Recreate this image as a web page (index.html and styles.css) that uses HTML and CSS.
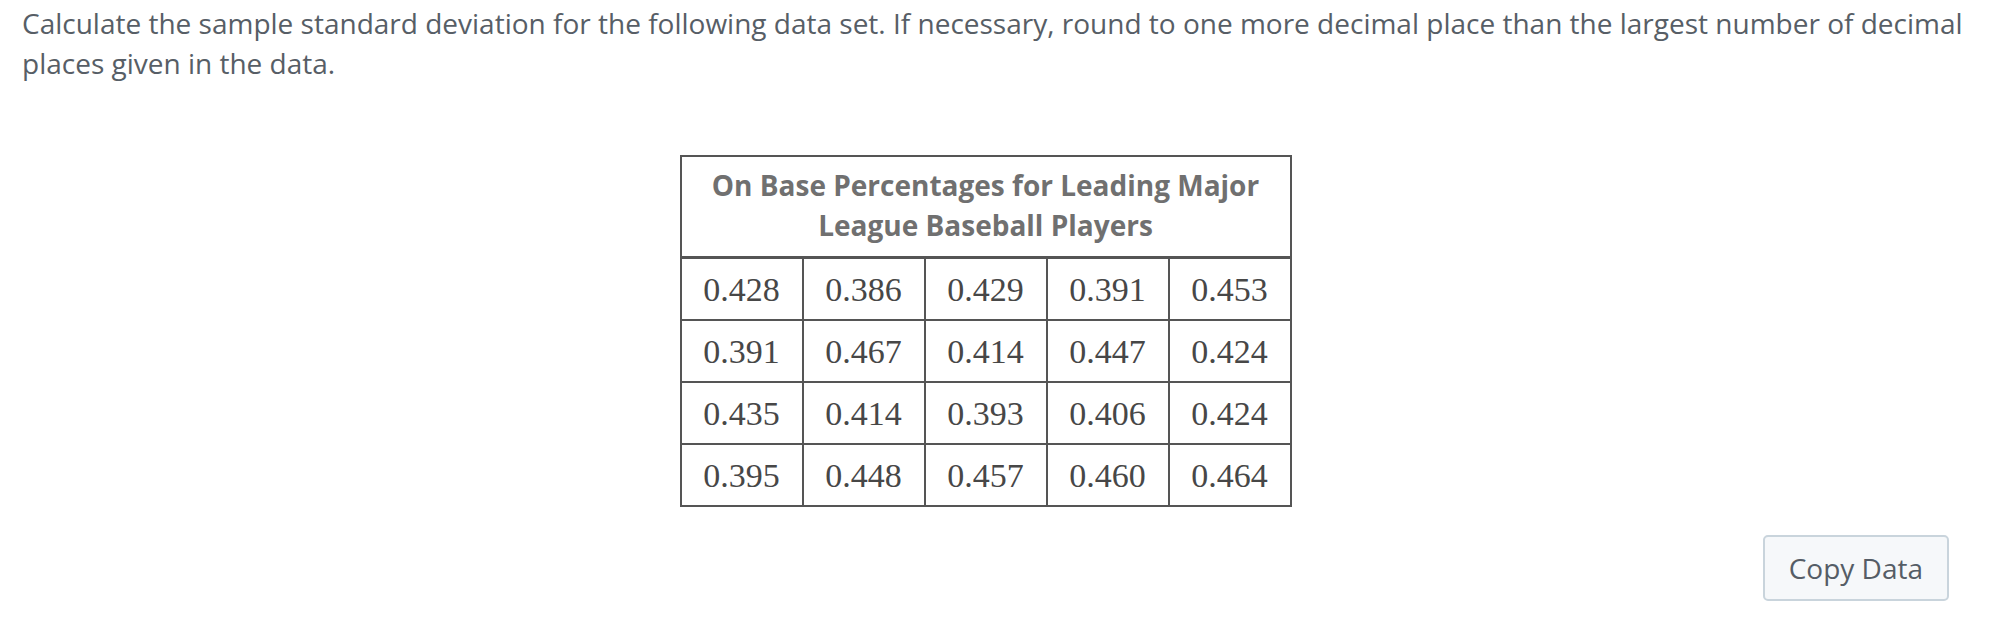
FILE: index.html
```html
<!DOCTYPE html>
<html>
<head>
<meta charset="utf-8">
<link rel="stylesheet" href="styles.css">
</head>
<body>
<div class="content">
  <p class="question">Calculate the sample standard deviation for the following data set. If necessary, round to one more decimal place than the largest number of decimal places given in the data.</p>
  <div class="table-wrap">
    <table class="data">
      <thead>
        <tr><th colspan="5">On Base Percentages for Leading Major<br>League Baseball Players</th></tr>
      </thead>
      <tbody>
        <tr><td>0.428</td><td>0.386</td><td>0.429</td><td>0.391</td><td>0.453</td></tr>
        <tr><td>0.391</td><td>0.467</td><td>0.414</td><td>0.447</td><td>0.424</td></tr>
        <tr><td>0.435</td><td>0.414</td><td>0.393</td><td>0.406</td><td>0.424</td></tr>
        <tr><td>0.395</td><td>0.448</td><td>0.457</td><td>0.460</td><td>0.464</td></tr>
      </tbody>
    </table>
  </div>
  <div class="actions">
    <button class="copy-btn">Copy Data</button>
  </div>
</div>
</body>
</html>
```

FILE: styles.css
```css
html, body {
  margin: 0;
  padding: 0;
  background: #ffffff;
}

.content {
  padding: 3px 41px 0 22px;
  font-family: "Open Sans", "Liberation Sans", sans-serif;
}

.question {
  margin: 0 -24px 0 0;
  font-size: 28px;
  line-height: 40px;
  color: #575e66;
}

.table-wrap {
  display: flex;
  justify-content: center;
  margin-top: 72px;
}

.data {
  border-collapse: collapse;
  table-layout: fixed;
  width: 612px;
  border: 2px solid #555555;
}

.data th {
  font-family: "Open Sans", "Liberation Sans", sans-serif;
  font-weight: 700;
  font-size: 28px;
  line-height: 40px;
  color: #707070;
  padding: 8px 10px 11px;
  border-bottom: 3px solid #555555;
  text-align: center;
}

.data td {
  font-family: "Liberation Serif", "Times New Roman", serif;
  font-size: 34px;
  line-height: 39px;
  color: #474747;
  text-align: center;
  vertical-align: middle;
  height: 60px;
  padding: 0;
  border: 2px solid #555555;
}

.actions {
  display: flex;
  justify-content: flex-end;
  margin-top: 28px;
}

.copy-btn {
  font-family: "Open Sans", "Liberation Sans", sans-serif;
  font-size: 28px;
  line-height: 38px;
  color: #555d66;
  background: #f6f8fa;
  border: 2px solid #c9d4dc;
  border-radius: 5px;
  padding: 12px 24px;
}
```
